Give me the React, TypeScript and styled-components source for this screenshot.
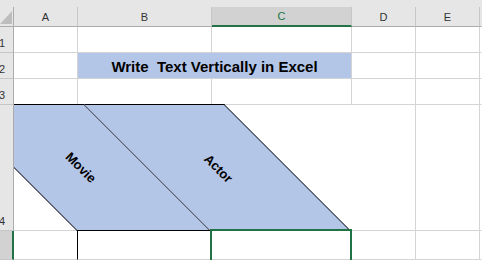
import styled, { createGlobalStyle } from "styled-components";

const GlobalStyle = createGlobalStyle`
  html, body {
    margin: 0;
    overflow: hidden;
    background: #ffffff;
  }
  body {
    font-family: "Liberation Sans", Arial, sans-serif;
  }
`;

const GRID = "#d4d4d4";
const HEAD = "#e6e6e6";
const HEAD_SEL = "#d2d2d2";
const GREEN = "#217346";
const FILL = "#b4c6e7";

const TopStrip = styled.div`
  height: 7px;
  background: ${HEAD};
`;

const Sheet = styled.div`
  display: grid;
  grid-template-columns: 14px 64px 134px 140px 64px 64px 1fr;
  grid-template-rows: 20px 26px 26px 26px 126px 29px;
  height: 253px;
`;

const Corner = styled.div`
  position: relative;
  z-index: 2;
  display: flex;
  align-items: flex-end;
  justify-content: flex-end;
  padding: 0 1px 2px 0;
  background: ${HEAD};
  border-right: 1px solid #ababab;
  border-bottom: 1px solid #ababab;
  box-sizing: border-box;
`;

const CornerTriangle = styled.div`
  width: 0;
  height: 0;
  border-left: 12px solid transparent;
  border-bottom: 13px solid #bdbdbd;
`;

const ColHeader = styled.div<{ $selected?: boolean; $last?: boolean }>`
  display: flex;
  align-items: center;
  justify-content: center;
  box-sizing: border-box;
  font-size: 11px;
  color: ${(p) => (p.$selected ? GREEN : "#333")};
  background: ${(p) => (p.$selected ? HEAD_SEL : HEAD)};
  border-right: 1px solid ${(p) => (p.$last ? "transparent" : "#c6c6c6")};
  border-bottom: ${(p) =>
    p.$selected ? `2px solid ${GREEN}` : "1px solid #ababab"};
`;

const RowHeader = styled.div<{ $selected?: boolean }>`
  position: relative;
  z-index: 2;
  display: flex;
  align-items: flex-end;
  justify-content: flex-end;
  padding: 0 8px 3px 0;
  overflow: hidden;
  white-space: nowrap;
  box-sizing: border-box;
  font-size: 11px;
  color: #333;
  background: ${(p) => (p.$selected ? HEAD_SEL : HEAD)};
  border-right: ${(p) =>
    p.$selected ? `2px solid ${GREEN}` : "1px solid #ababab"};
  border-bottom: 1px solid #c6c6c6;
`;

const Cell = styled.div<{
  $right?: string;
  $bottom?: string;
  $bg?: string;
  $span?: number;
}>`
  position: relative;
  box-sizing: border-box;
  background: ${(p) => p.$bg ?? "transparent"};
  border-right: 1px solid ${(p) => p.$right ?? GRID};
  border-bottom: 1px solid ${(p) => p.$bottom ?? GRID};
  ${(p) => (p.$span ? `grid-column: span ${p.$span};` : "")}
`;

const TitleCell = styled(Cell)`
  display: flex;
  align-items: flex-end;
  justify-content: center;
  padding-bottom: 3px;
  font-size: 15px;
  font-weight: bold;
  color: #000;
  white-space: pre;
`;

// angled cell fill: the rotated-text cell draws as a parallelogram
const AngledFill = styled.div<{ $left?: boolean; $bottom?: boolean }>`
  position: absolute;
  z-index: 0;
  left: -1px;
  top: -1px;
  right: 0;
  bottom: -1px;
  box-sizing: border-box;
  display: flex;
  align-items: center;
  justify-content: center;
  background: ${FILL};
  border-top: 1px solid #000;
  border-right: 1px solid #000;
  border-left: ${(p) => (p.$left ? "1px solid #000" : "none")};
  border-bottom: ${(p) => (p.$bottom ? "1px solid #000" : "none")};
  transform-origin: bottom;
  transform: skewX(45deg);
`;

const AngledLabel = styled.span`
  font-size: 13px;
  font-weight: bold;
  color: #000;
  white-space: nowrap;
  transform: skewX(-45deg) rotate(45deg);
`;

const Selection = styled.div`
  position: absolute;
  z-index: 3;
  left: -2px;
  right: -1px;
  top: -2px;
  bottom: -12px;
  border: 2px solid ${GREEN};
`;

const cols = ["A", "B", "C", "D", "E", ""];

export default function App() {
  return (
    <>
      <GlobalStyle />
      <TopStrip />
      <Sheet>
        <Corner>
          <CornerTriangle />
        </Corner>
        {cols.map((c, i) => (
          <ColHeader key={i} $selected={c === "C"} $last={i === cols.length - 1}>
            {c}
          </ColHeader>
        ))}

        <RowHeader>1</RowHeader>
        {cols.map((c, i) => (
          <Cell key={i} $right={i === cols.length - 1 ? "transparent" : GRID} />
        ))}

        <RowHeader>2</RowHeader>
        <Cell />
        <TitleCell $span={2} $bg={FILL}>
          {"Write  Text Vertically in Excel"}
        </TitleCell>
        <Cell />
        <Cell />
        <Cell $right="transparent" />

        <RowHeader>3</RowHeader>
        {cols.map((c, i) => (
          <Cell key={i} $right={i === cols.length - 1 ? "transparent" : GRID} />
        ))}

        <RowHeader>4</RowHeader>
        <Cell $right="transparent" />
        <Cell $right="transparent" $bottom="transparent">
          <AngledFill $left $bottom>
            <AngledLabel>Movie</AngledLabel>
          </AngledFill>
        </Cell>
        <Cell $right="transparent" $bottom="transparent">
          <AngledFill>
            <AngledLabel>Actor</AngledLabel>
          </AngledFill>
        </Cell>
        <Cell />
        <Cell />
        <Cell $right="transparent" />

        <RowHeader $selected />
        <Cell $right="#000" />
        <Cell />
        <Cell>
          <Selection />
        </Cell>
        <Cell />
        <Cell />
        <Cell $right="transparent" />
      </Sheet>
    </>
  );
}
